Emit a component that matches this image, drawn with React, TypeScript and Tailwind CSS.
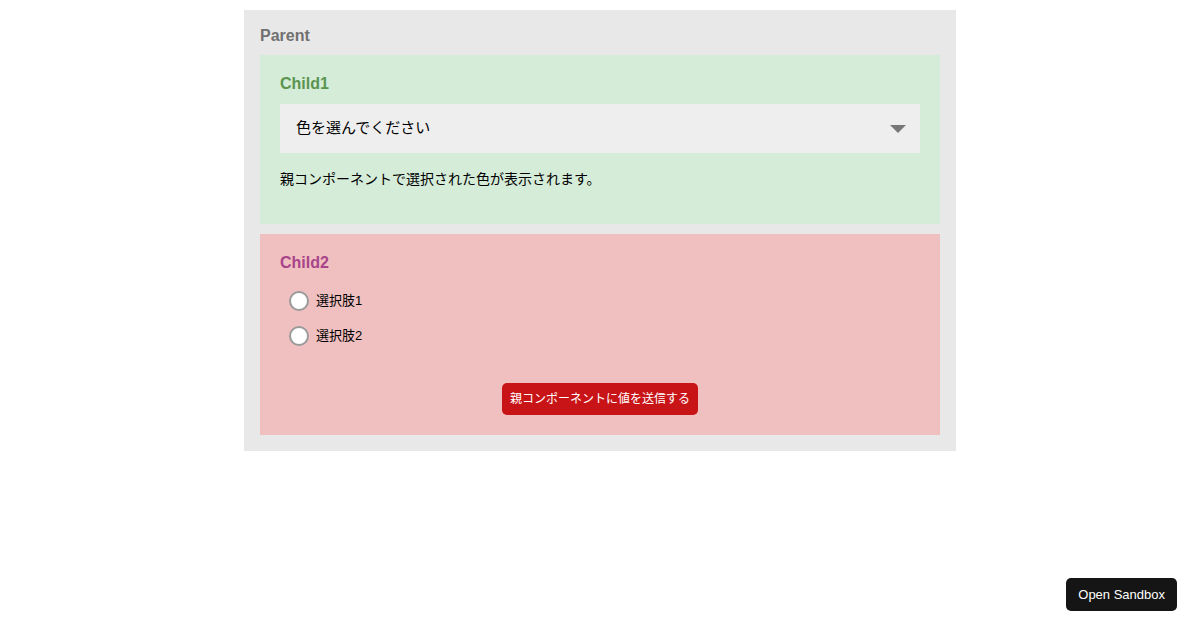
import React, { useState } from 'react';

const FONT = "font-['Liberation_Sans','Noto_Sans_CJK_JP',sans-serif]";

const colors = ['赤', '青', '緑'];

const Child1 = ({ value, onChange }: { value: string; onChange: (v: string) => void }) => {
  return (
    <div className="bg-[#d5ecd8] p-5 pb-5">
      <h4 className="text-[16px] leading-[18px] font-bold text-[#5a9450] mb-[11px]">Child1</h4>
      <div className="relative">
        <select
          value={value}
          onChange={(e) => onChange(e.target.value)}
          className="w-full h-[49px] appearance-none bg-[#eeeeee] pl-4 pr-10 text-[15px] text-black outline-none"
        >
          <option value="">色を選んでください</option>
          {colors.map((c) => (
            <option key={c} value={c}>
              {c}
            </option>
          ))}
        </select>
        {/* dropdown arrow */}
        <svg
          className="absolute right-[14px] top-[21px] pointer-events-none"
          width="16"
          height="8"
          viewBox="0 0 16 8"
        >
          <path d="M0 0 L16 0 L8 8 Z" fill="#777777" />
        </svg>
      </div>
      <p className="mt-4 mb-[15px] text-[14px] leading-[20px] text-black">
        親コンポーネントで選択された色が表示されます。
      </p>
    </div>
  );
};

const Child2 = () => {
  const [picked, setPicked] = useState<string>('');

  return (
    <div className="bg-[#f0bfbf] p-5">
      <h4 className="text-[16px] leading-[18px] font-bold text-[#a8448a] mb-[17px]">Child2</h4>
      <div className="flex flex-col gap-[11px] ml-[9px]">
        {['1', '2'].map((n) => (
          <label key={n} className="flex items-center h-6 gap-[7px] text-[13px] text-black cursor-pointer">
            <input
              type="radio"
              name="choice"
              checked={picked === n}
              onChange={() => setPicked(n)}
              className="appearance-none w-5 h-5 rounded-full bg-white border-2 border-[#9a9a9a] checked:border-[6px] checked:border-[#1a73e8]"
            />
            <span>選択肢{n}</span>
          </label>
        ))}
      </div>
      <div className="flex justify-center mt-[35px]">
        <button className="h-8 px-2 rounded-[5px] bg-[#c81417] text-white text-[12px] leading-none">
          親コンポーネントに値を送信する
        </button>
      </div>
    </div>
  );
};

export default function App() {
  const [color, setColor] = useState<string>('');

  return (
    <div className={`min-h-screen bg-white ${FONT}`}>
      <div className="w-[712px] mx-auto mt-[10px] bg-[#e8e8e8] p-4 flex flex-col">
        <h3 className="text-[16px] leading-[18px] font-bold text-[#707070] mt-px mb-[10px]">Parent</h3>
        <div className="flex flex-col gap-[10px]">
          <Child1 value={color} onChange={setColor} />
          <Child2 />
        </div>
      </div>

      <button className="fixed right-[23px] bottom-[19px] h-[33px] px-[12px] rounded-[5px] bg-[#151515] text-white text-[13px]">
        Open Sandbox
      </button>
    </div>
  );
}
